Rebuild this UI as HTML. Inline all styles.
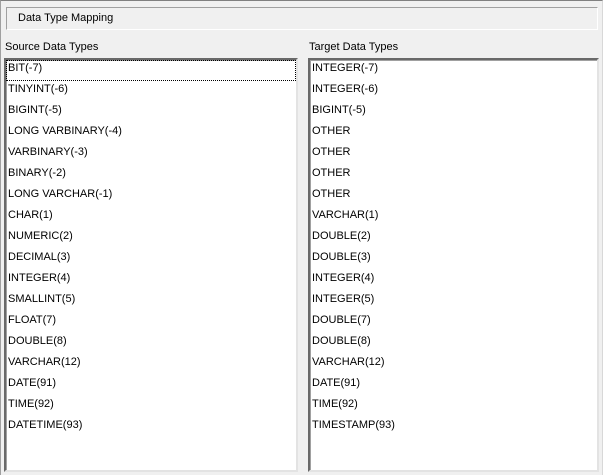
<!DOCTYPE html>
<html><head><style>
body{margin:0;width:603px;height:475px;background:#f0f0f0;position:relative;overflow:hidden;font-family:"Liberation Sans",sans-serif;font-size:11px;color:#000}
.outer{position:absolute;left:0;top:0;width:601px;height:474px;border-top:1px solid #808080;border-left:1px solid #a0a0a0;border-right:1px solid #d8d8d8}
.hdr{position:absolute;left:6px;top:7px;width:590px;height:21px;border-top:1px solid #a0a0a0;border-left:1px solid #a0a0a0;border-right:1px solid #fff;border-bottom:1px solid #fff}
.hdr span{position:absolute;left:11px;top:4px}
.lbl{position:absolute;top:41px}
.list{position:absolute;top:58px;height:410px;background:#fff;border-top:2px solid #696969;border-left:2px solid #696969;border-right:2px solid #e3e3e3;border-bottom:2px solid #e3e3e3;box-shadow:inset 1px 1px 0 #a0a0a0}
.list div{height:21px;line-height:17px;padding-left:2px;white-space:nowrap}
.sel{outline:1px dotted #000;outline-offset:-1px}
</style></head><body>
<div class="outer"></div>
<div class="hdr"><span>Data Type Mapping</span></div>
<div class="lbl" style="left:5px">Source Data Types</div>
<div class="lbl" style="left:309px">Target Data Types</div>
<div class="list" style="left:4px;width:290px">
<div class="sel">BIT(-7)</div><div>TINYINT(-6)</div><div>BIGINT(-5)</div><div>LONG VARBINARY(-4)</div><div>VARBINARY(-3)</div><div>BINARY(-2)</div><div>LONG VARCHAR(-1)</div><div>CHAR(1)</div><div>NUMERIC(2)</div><div>DECIMAL(3)</div><div>INTEGER(4)</div><div>SMALLINT(5)</div><div>FLOAT(7)</div><div>DOUBLE(8)</div><div>VARCHAR(12)</div><div>DATE(91)</div><div>TIME(92)</div><div>DATETIME(93)</div>
</div>
<div class="list" style="left:308px;width:287px">
<div>INTEGER(-7)</div><div>INTEGER(-6)</div><div>BIGINT(-5)</div><div>OTHER</div><div>OTHER</div><div>OTHER</div><div>OTHER</div><div>VARCHAR(1)</div><div>DOUBLE(2)</div><div>DOUBLE(3)</div><div>INTEGER(4)</div><div>INTEGER(5)</div><div>DOUBLE(7)</div><div>DOUBLE(8)</div><div>VARCHAR(12)</div><div>DATE(91)</div><div>TIME(92)</div><div>TIMESTAMP(93)</div>
</div>
</body></html>
